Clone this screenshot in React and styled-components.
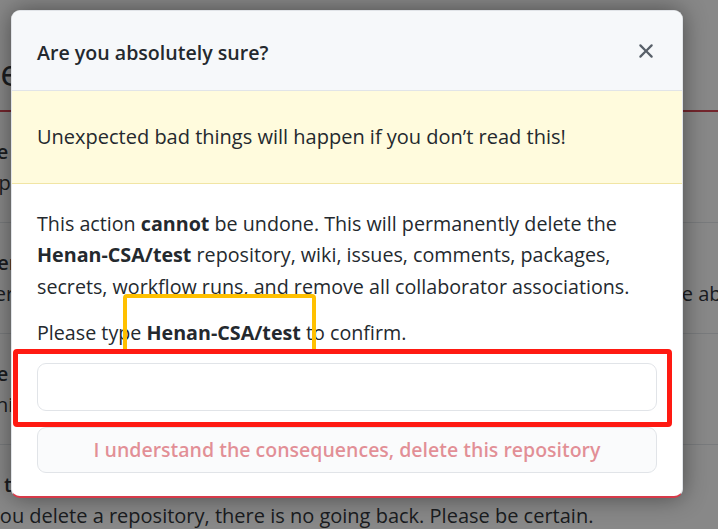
import React from "react";
import styled, { createGlobalStyle } from "styled-components";

const GlobalStyle = createGlobalStyle`
  html, body {
    margin: 0;
    padding: 0;
    width: 718px;
    height: 529px;
    overflow: hidden;
    background: #ffffff;
    font-family: "Open Sans", "Noto Sans", sans-serif;
    color: #24292e;
  }
  * {
    box-sizing: border-box;
  }
`;

// ---- page under the dialog ----
const Page = styled.div`
  position: relative;
  width: 718px;
  height: 529px;
  overflow: hidden;
`;

const Settings = styled.div`
  margin-left: -64px;
  width: 900px;
  padding-top: 50px;
`;

const Subhead = styled.h2`
  margin: 0 0 15px -132px;
  font-size: 36px;
  line-height: 45px;
  font-weight: 400;
  white-space: nowrap;
`;

const DangerBox = styled.div`
  border-top: 2px solid #d73a49;
`;

const DangerRow = styled.div`
  padding: 24px 0;
  border-bottom: 1px solid #e1e4e8;
  font-size: 20px;
  line-height: 31px;
  white-space: nowrap;
`;

const RowTitle = styled.div`
  font-weight: 600;
`;

const RowText = styled.div`
  font-weight: 400;
`;

const Backdrop = styled.div`
  position: absolute;
  inset: 0;
  background: rgba(17, 17, 17, 0.5);
  display: flex;
  align-items: flex-start;
  padding: 10px 0 0 11px;
`;

// ---- dialog ----
const Dialog = styled.div`
  position: relative;
  width: 672px;
  background: #ffffff;
  border: 1px solid #e1e4e8;
  border-bottom: 2px solid #d73a49;
  border-radius: 9px;
  box-shadow: 0 0 24px rgba(0, 0, 0, 0.45);
  overflow: hidden;
`;

const DialogHeader = styled.div`
  display: flex;
  align-items: center;
  justify-content: space-between;
  height: 80px;
  padding: 3px 24px 0 25px;
  background: #f6f8fa;
  border-bottom: 1px solid #e1e4e8;
`;

const DialogTitle = styled.h3`
  margin: 0;
  font-size: 19.6px;
  font-weight: 600;
  color: #24292e;
`;

const CloseButton = styled.button`
  display: flex;
  margin-top: -3px;
  padding: 0;
  border: 0;
  background: transparent;
  color: #586069;
  cursor: pointer;
`;

const Flash = styled.div`
  padding: 30px 25px;
  background: #fffbdd;
  border-bottom: 1px solid #f1e5a4;
  font-size: 20px;
  line-height: 31.5px;
  color: #24292e;
`;

const DialogBody = styled.div`
  padding: 24px 25px 23px;
  font-size: 19.7px;
  line-height: 31.5px;
  color: #24292e;
`;

const Para = styled.p`
  margin: 0 0 ${(p) => p.$gap}px;
`;

const ConfirmInput = styled.input`
  display: block;
  width: 100%;
  height: 48px;
  margin: 0 0 16px;
  padding: 0 12px;
  font: inherit;
  border: 1px solid #e1e4e8;
  border-radius: 9px;
  background: #ffffff;
  outline: none;
`;

const DangerButton = styled.button`
  display: block;
  width: 100%;
  height: 46px;
  padding: 0 16px;
  font-family: inherit;
  font-size: 19.5px;
  font-weight: 600;
  color: #cb2431;
  background: #fafbfc;
  border: 1px solid #e1e4e8;
  border-radius: 9px;

  &:disabled {
    color: rgba(203, 36, 49, 0.5);
  }
`;

// ---- screenshot annotations drawn over the dialog ----
const Mark = styled.div`
  position: absolute;
  left: ${(p) => p.$x}px;
  top: ${(p) => p.$y}px;
  width: ${(p) => p.$w}px;
  height: ${(p) => p.$h}px;
  border: ${(p) => p.$t}px solid ${(p) => p.$color};
  border-radius: 4px;
  pointer-events: none;
`;

const XIcon = () => (
  <svg width="24" height="24" viewBox="0 0 16 16" fill="currentColor">
    <path d="M3.72 3.72a.75.75 0 011.06 0L8 6.94l3.22-3.22a.75.75 0 111.06 1.06L9.06 8l3.22 3.22a.75.75 0 11-1.06 1.06L8 9.06l-3.22 3.22a.75.75 0 01-1.06-1.06L6.94 8 3.72 4.78a.75.75 0 010-1.06z" />
  </svg>
);

const rows = [
  ["Change repository visibility", "This repository is currently public."],
  [
    "Transfer ownership",
    "Transfer this repository to another user or to an organization where you have the ability to create repositories.",
  ],
  ["Archive this repository", "Mark this repository as archived and read-only."],
  ["Delete this repository", "Once you delete a repository, there is no going back. Please be certain."],
];

export default function App() {
  return (
    <>
      <GlobalStyle />
      <Page>
        <Settings>
          <Subhead>Danger Zone</Subhead>
          <DangerBox>
            {rows.map(([title, text]) => (
              <DangerRow key={title}>
                <RowTitle>{title}</RowTitle>
                <RowText>{text}</RowText>
              </DangerRow>
            ))}
          </DangerBox>
        </Settings>

        <Backdrop>
          <Dialog>
            <DialogHeader>
              <DialogTitle>Are you absolutely sure?</DialogTitle>
              <CloseButton aria-label="Close dialog">
                <XIcon />
              </CloseButton>
            </DialogHeader>
            <Flash>Unexpected bad things will happen if you don’t read this!</Flash>
            <DialogBody>
              <Para $gap={15}>
                This action <strong>cannot</strong> be undone. This will permanently delete the{" "}
                <strong>Henan-CSA/test</strong> repository, wiki, issues, comments, packages,
                secrets, workflow runs, and remove all collaborator associations.
              </Para>
              <Para $gap={14}>
                Please type <strong>Henan-CSA/test</strong> to confirm.
              </Para>
              <ConfirmInput type="text" aria-label="Type in the name of the repository to confirm" />
              <DangerButton type="submit" disabled>
                I understand the consequences, delete this repository
              </DangerButton>
            </DialogBody>
            <Mark $x={111} $y={283} $w={193} $h={59} $t={4} $color="#ffc000" />
            <Mark $x={1} $y={338} $w={659} $h={78} $t={5} $color="#ff1a12" />
          </Dialog>
        </Backdrop>
      </Page>
    </>
  );
}
